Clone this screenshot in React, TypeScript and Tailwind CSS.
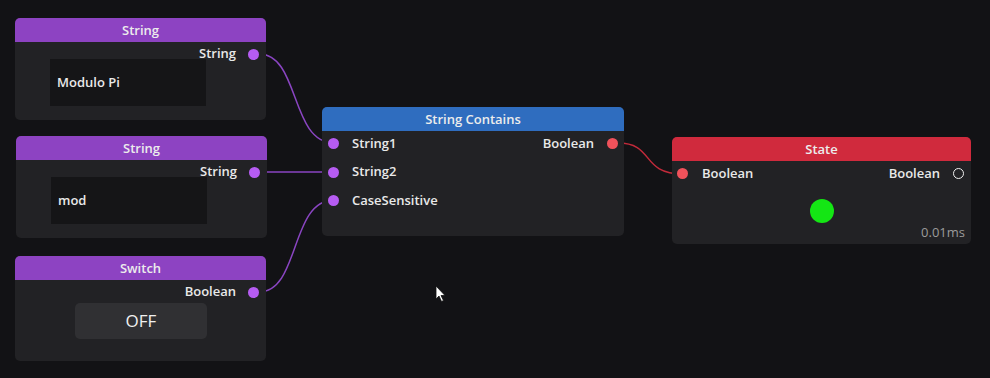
import React from "react";

const PURPLE = "bg-[#8d43c2]";

function Dot({ color = "bg-[#b65cf2]" }: { color?: string }) {
  return <span className={`block w-[11px] h-[11px] rounded-full ${color}`} />;
}

function Header({ title, color }: { title: string; color: string }) {
  return (
    <div className={`h-[24px] pt-[2px] ${color} rounded-t-[5px] flex items-center justify-center text-[13px] font-semibold text-[#ececec]`}>
      {title}
    </div>
  );
}

function OutRow({ label }: { label: string }) {
  return (
    <div className="h-[24px] flex items-center justify-end pr-[7px] gap-[12px]">
      <span>{label}</span>
      <Dot />
    </div>
  );
}

function StringNode({ top, left, value }: { top: number; left: number; value: string }) {
  return (
    <div
      className="absolute w-[251px] h-[102px] bg-[#222225] rounded-[5px] flex flex-col"
      style={{ top, left }}
    >
      <Header title="String" color={PURPLE} />
      <OutRow label="String" />
      <div className="pl-[35px]">
        <div className="-mt-[7px] w-[156px] h-[47px] bg-[#151517] flex items-center pl-[7px] text-[13px]">
          {value}
        </div>
      </div>
    </div>
  );
}

export default function App() {
  return (
    <div
      className="relative w-[990px] h-[378px] bg-[#121215] overflow-hidden text-[#e9e9e9] text-[13px] font-semibold"
      style={{ fontFamily: '"Open Sans", "Noto Sans", sans-serif' }}
    >
      <svg className="absolute inset-0" width="990" height="378" fill="none">
        <path d="M259 54 C300 54 290 143 334 143" stroke="#8a45c2" strokeWidth="1.5" />
        <path d="M259 172 L334 172" stroke="#8a45c2" strokeWidth="1.5" />
        <path d="M259 292 C300 292 290 200 334 200" stroke="#8a45c2" strokeWidth="1.5" />
        <path d="M618 143 C655 143 640 174 683 174" stroke="#c12a3a" strokeWidth="1.5" />
      </svg>

      <StringNode top={18} left={15} value="Modulo Pi" />
      <StringNode top={136} left={16} value="mod" />

      {/* Switch node */}
      <div className="absolute top-[256px] left-[15px] w-[251px] h-[105px] bg-[#222225] rounded-[5px] flex flex-col">
        <Header title="Switch" color={PURPLE} />
        <OutRow label="Boolean" />
        <div className="pl-[60px]">
          <div className="-mt-[1px] w-[132px] h-[36px] bg-[#303033] rounded-[5px] flex items-center justify-center text-[17px] font-medium text-[#f0f0f0]">
            OFF
          </div>
        </div>
      </div>

      {/* String Contains node */}
      <div className="absolute top-[107px] left-[322px] w-[302px] h-[129px] bg-[#222225] rounded-[5px] flex flex-col">
        <Header title="String Contains" color="bg-[#2f6dbf]" />
        <div className="flex flex-col gap-[4.5px] pt-[0.5px]">
          <div className="h-[24px] flex items-center pl-[6px] pr-[6px]">
            <Dot />
            <span className="ml-[13px]">String1</span>
            <span className="ml-auto">Boolean</span>
            <span className="ml-[13px]">
              <Dot color="bg-[#f0525b]" />
            </span>
          </div>
          <div className="h-[24px] flex items-center pl-[6px]">
            <Dot />
            <span className="ml-[13px]">String2</span>
          </div>
          <div className="h-[24px] flex items-center pl-[6px]">
            <Dot />
            <span className="ml-[13px]">CaseSensitive</span>
          </div>
        </div>
      </div>

      {/* State node */}
      <div className="absolute top-[137px] left-[672px] w-[299px] h-[107px] bg-[#222225] rounded-[5px] flex flex-col">
        <Header title="State" color="bg-[#d02a3d]" />
        <div className="h-[25px] flex items-center pl-[5px] pr-[7px]">
          <Dot color="bg-[#f0525b]" />
          <span className="ml-[14px]">Boolean</span>
          <span className="ml-auto">Boolean</span>
          <span className="ml-[13px] block w-[11px] h-[11px] rounded-full border-[1.5px] border-[#f0f0f0]" />
        </div>
        <div className="flex justify-center pt-[13px]">
          <span className="block w-[24px] h-[24px] rounded-full bg-[#14e614]" />
        </div>
        <div className="flex justify-end pr-[6px] text-[13px] font-normal text-[#9b9b9b]">0.01ms</div>
      </div>

      {/* cursor */}
      <svg className="absolute left-[435px] top-[285px]" width="12" height="18" viewBox="0 0 12 18">
        <path d="M1 1 L1 14 L4 11 L6.5 16.5 L8.5 15.5 L6 10.5 L10 10.5 Z" fill="#ffffff" stroke="#111" strokeWidth="0.8" />
      </svg>
    </div>
  );
}
